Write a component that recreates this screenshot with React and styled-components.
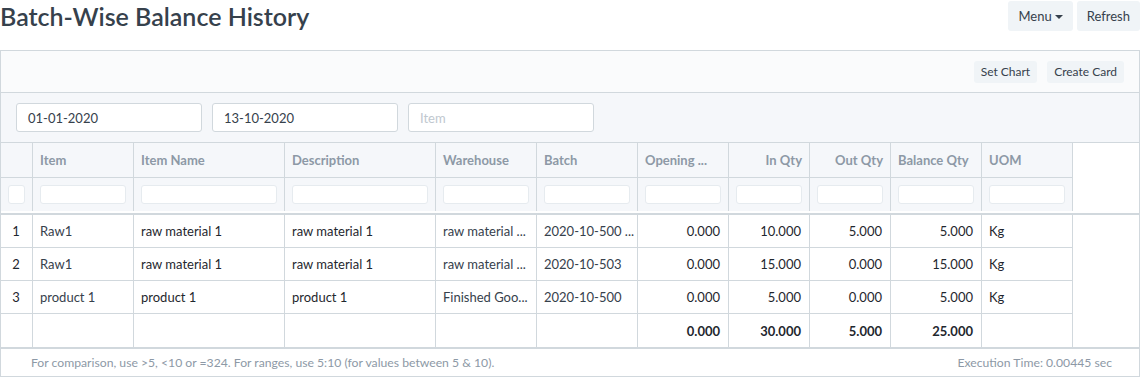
import React from "react";
import styled, { createGlobalStyle } from "styled-components";

const GlobalStyle = createGlobalStyle`
  body {
    margin: 0;
    background: #fff;
    font-family: Lato, "Noto Sans", sans-serif;
    color: #36414c;
  }
`;

// column widths of the report grid
const COLS = "32px 101px 151px 151px 101px 101px 91px 81px 81px 91px 91px";

const Page = styled.div`
  width: 1140px;
`;

const PageHead = styled.header`
  display: flex;
  justify-content: space-between;
  align-items: flex-start;
  height: 50px;
`;

const Title = styled.h1`
  margin: 0;
  font-size: 25px;
  line-height: 32px;
  font-weight: 600;
  color: #36414c;
  white-space: nowrap;
`;

const Actions = styled.div`
  display: flex;
  gap: 4px;
  padding-top: 1px;
`;

const Btn = styled.button`
  display: flex;
  align-items: center;
  gap: 3px;
  height: ${(p) => (p.$small ? "22px" : "30px")};
  padding: 0 ${(p) => (p.$small ? "7px" : "10px")};
  border: none;
  border-radius: 3px;
  background: #f0f4f7;
  color: #36414c;
  font-family: inherit;
  font-size: ${(p) => (p.$small ? "12px" : "13px")};
  cursor: pointer;
`;

const Caret = styled.span`
  display: inline-block;
  width: 0;
  height: 0;
  border-left: 4px solid transparent;
  border-right: 4px solid transparent;
  border-top: 4px solid #36414c;
  margin-top: 2px;
`;

const Frame = styled.section`
  border: 1px solid #d1d8dd;
`;

const Toolbar = styled.div`
  display: flex;
  justify-content: flex-end;
  align-items: center;
  gap: 10px;
  height: 41px;
  padding: 0 15px;
  background: #fafbfc;
  border-bottom: 1px solid #d1d8dd;
`;

const FilterBar = styled.div`
  display: flex;
  align-items: center;
  gap: 10px;
  height: 49px;
  padding: 0 15px;
  background: #f5f7fa;
  border-bottom: 1px solid #d1d8dd;
`;

const FilterInput = styled.div`
  box-sizing: border-box;
  width: 186px;
  height: 29px;
  padding: 0 11px;
  display: flex;
  align-items: center;
  background: #fff;
  border: 1px solid #d1d8dd;
  border-radius: 3px;
  font-size: 13px;
  color: ${(p) => (p.$placeholder ? "#c0c8cf" : "#36414c")};
`;

const HeadBlock = styled.div`
  padding-bottom: 2px;
  border-bottom: 2px solid #d1d8dd;
`;

const Row = styled.div`
  display: grid;
  grid-template-columns: ${COLS};
  width: 1072px;
`;

const HeadCell = styled.div`
  box-sizing: border-box;
  height: ${(p) => (p.$filter ? "33px" : "35px")};
  padding: 0 7px;
  display: flex;
  align-items: center;
  justify-content: ${(p) => (p.$right ? "flex-end" : "flex-start")};
  background: #f5f7fa;
  border-right: 1px solid #d1d8dd;
  border-bottom: ${(p) => (p.$filter ? "none" : "1px solid #d1d8dd")};
  font-size: 13px;
  font-weight: 700;
  color: #8d99a6;
  white-space: nowrap;
  overflow: hidden;
`;

const CellInput = styled.div`
  box-sizing: border-box;
  width: 100%;
  height: 19px;
  background: #fff;
  border: 1px solid #e6ebef;
  border-radius: 3px;
`;

const Cell = styled.div`
  box-sizing: border-box;
  height: 33px;
  padding: 0 8px 0 7px;
  display: flex;
  align-items: center;
  justify-content: ${(p) =>
    p.$center ? "center" : p.$right ? "flex-end" : "flex-start"};
  border-right: 1px solid #d1d8dd;
  border-bottom: 1px solid #d1d8dd;
  font-size: 13px;
  font-weight: ${(p) => (p.$bold ? 700 : 400)};
  color: ${(p) => (p.$link ? "#36414c" : "#1f272e")};
  white-space: nowrap;
  overflow: hidden;

  ${Row}:last-child & {
    border-bottom: none;
  }
`;

const Body = styled.div``;

const Footer = styled.footer`
  display: flex;
  justify-content: space-between;
  align-items: center;
  height: 27px;
  padding: 0 27px 0 30px;
  border-top: 2px solid #d1d8dd;
  font-size: 12.2px;
  color: #8d99a6;
`;

const headers = [
  { label: "" },
  { label: "Item" },
  { label: "Item Name" },
  { label: "Description" },
  { label: "Warehouse" },
  { label: "Batch" },
  { label: "Opening ..." },
  { label: "In Qty", right: true },
  { label: "Out Qty", right: true },
  { label: "Balance Qty" },
  { label: "UOM" },
];

const rows = [
  ["1", "Raw1", "raw material 1", "raw material 1", "raw material ...", "2020-10-500 ...", "0.000", "10.000", "5.000", "5.000", "Kg"],
  ["2", "Raw1", "raw material 1", "raw material 1", "raw material ...", "2020-10-503", "0.000", "15.000", "0.000", "15.000", "Kg"],
  ["3", "product 1", "product 1", "product 1", "Finished Goo...", "2020-10-500", "0.000", "5.000", "0.000", "5.000", "Kg"],
];

const totals = ["", "", "", "", "", "", "0.000", "30.000", "5.000", "25.000", ""];

const linkCols = [1, 4, 5];

const App = () => {
  return (
    <Page>
      <GlobalStyle />
      <PageHead>
        <Title>Batch-Wise Balance History</Title>
        <Actions>
          <Btn>
            Menu <Caret />
          </Btn>
          <Btn>Refresh</Btn>
        </Actions>
      </PageHead>

      <Frame>
        <Toolbar>
          <Btn $small>Set Chart</Btn>
          <Btn $small>Create Card</Btn>
        </Toolbar>

        <FilterBar>
          <FilterInput>01-01-2020</FilterInput>
          <FilterInput>13-10-2020</FilterInput>
          <FilterInput $placeholder>Item</FilterInput>
        </FilterBar>

        <HeadBlock>
          <Row>
            {headers.map((h, i) => (
              <HeadCell key={i} $right={h.right}>
                {h.label}
              </HeadCell>
            ))}
          </Row>
          <Row>
            {headers.map((h, i) => (
              <HeadCell key={i} $filter>
                <CellInput />
              </HeadCell>
            ))}
          </Row>
        </HeadBlock>

        <Body>
          {rows.map((r, ri) => (
            <Row key={ri}>
              {r.map((v, ci) => (
                <Cell
                  key={ci}
                  $center={ci === 0}
                  $right={ci >= 6 && ci <= 9}
                  $link={linkCols.includes(ci)}
                >
                  {v}
                </Cell>
              ))}
            </Row>
          ))}
          <Row>
            {totals.map((v, ci) => (
              <Cell key={ci} $right={ci >= 6 && ci <= 9} $bold>
                {v}
              </Cell>
            ))}
          </Row>
        </Body>

        <Footer>
          <span>
            For comparison, use &gt;5, &lt;10 or =324. For ranges, use 5:10 (for values between 5 &amp; 10).
          </span>
          <span>Execution Time: 0.00445 sec</span>
        </Footer>
      </Frame>
    </Page>
  );
};

export default App;
